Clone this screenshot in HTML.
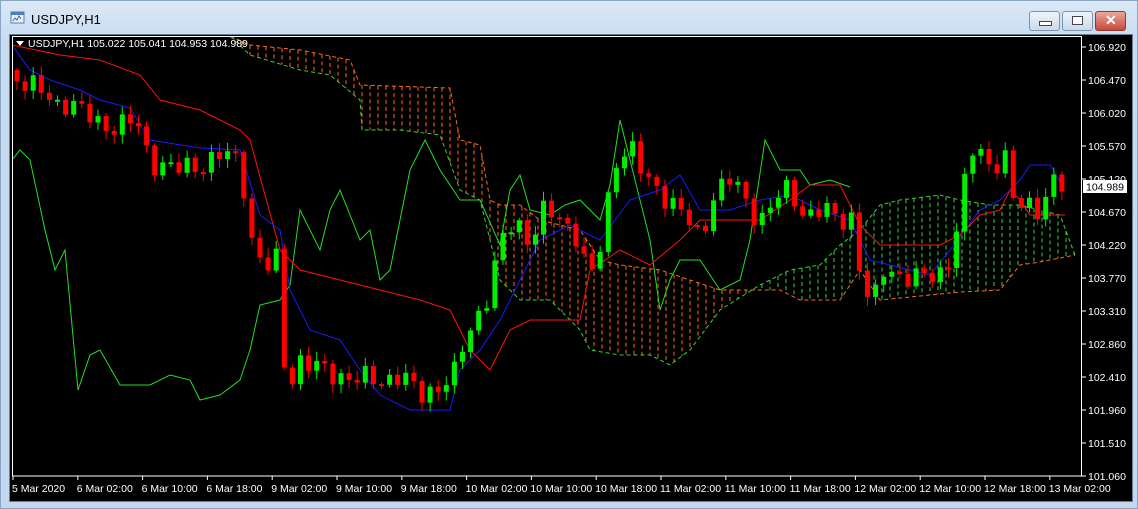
<!DOCTYPE html>
<html><head><meta charset="utf-8"><style>
html,body{margin:0;padding:0;width:1138px;height:509px;overflow:hidden;background:#cddff0;font-family:"Liberation Sans",sans-serif}
#win{position:absolute;left:0;top:0;width:1136px;height:507px;border:1px solid #8aa6c4;background:linear-gradient(#dbe8f6,#c8dcf0 40px,#c3d8ee)}
#title{position:absolute;left:30px;top:11px;font-size:13px;color:#000}
.btn{position:absolute;top:10px;width:29px;height:18px;border:1px solid #7b94b3;border-radius:3px;background:linear-gradient(#eef4fb,#cdd9e7)}
#cht{position:absolute;left:9px;top:34px;width:1122px;height:466px;background:#000;border:1px solid #6d7f93}
svg text{font-family:"Liberation Sans",sans-serif;font-size:10.5px;fill:#fff}
</style></head><body>
<div id="win">
<svg style="position:absolute;left:9px;top:9px" width="16" height="16"><rect x="1" y="2" width="13" height="11" fill="#e8f0fa" stroke="#4f7fb5"/><rect x="1" y="2" width="13" height="3" fill="#4f7fb5"/><path d="M3 11 l2-3 2 2 2-4 2 3" stroke="#3a6ea5" fill="none"/></svg>
<div id="title">USDJPY,H1</div>
<div class="btn" style="left:1028px"><div style="position:absolute;left:9px;top:9px;width:11px;height:3px;background:#fff;border:1px solid #445"></div></div>
<div class="btn" style="left:1061px"><div style="position:absolute;left:9px;top:4px;width:9px;height:7px;background:#fff;border:1px solid #445"></div></div>
<div class="btn" style="left:1094px;background:linear-gradient(#e9a89c,#c9473a);border-color:#8e3a32"><div style="position:absolute;left:9px;top:0px;color:#fff;font-weight:bold;font-size:14px">✕</div></div>
</div>
<div id="cht"></div>
<svg id="s" style="position:absolute;left:0;top:0" width="1138" height="509"></svg>
<script>
(function(){
var s=document.getElementById('s'),h='';
function L(pts,c,dash,w){h+='<polyline fill="none" stroke="'+c+'" stroke-width="'+(w||1)+'" '+(dash?'stroke-dasharray="'+dash+'" ':'')+'points="'+pts.map(function(p){return p.join(',')}).join(' ')+'"/>';}
function interp(pts,x){for(var i=1;i<pts.length;i++){if(x<=pts[i][0]){var a=pts[i-1],b=pts[i];return a[1]+(b[1]-a[1])*(x-a[0])/(b[0]-a[0]);}}return pts[pts.length-1][1];}
h+='<defs><clipPath id="c"><rect x="13" y="37" width="1069" height="439"/></clipPath></defs><g clip-path="url(#c)">';
var G=[[230,36],[250,55],[300,70],[330,75],[360,100],[362,130],[400,130],[440,135],[460,190],[480,200],[500,280],[520,300],[550,300],[580,330],[590,350],[620,355],[650,355],[670,365],[690,350],[720,310],[760,285],[790,270],[820,265],[840,245],[860,230],[880,205],[900,200],[940,195],[960,200],[990,205],[1020,205],[1040,210],[1060,215],[1075,255]];
var O=[[230,36],[250,45],[300,50],[350,60],[360,85],[450,88],[460,140],[480,145],[490,200],[500,205],[520,205],[540,220],[560,225],[580,230],[600,260],[620,265],[660,270],[690,280],[720,290],[750,290],[780,290],[800,300],[840,300],[860,270],[880,300],[960,292],[1000,290],[1020,265],[1040,262],[1075,255]];
for(var x=234;x<1075;x+=8){var a=interp(G,x),b=interp(O,x);var c=b<a?'#ff6a1a':'#3ad23a';h+='<line x1="'+x+'" x2="'+x+'" y1="'+Math.min(a,b)+'" y2="'+Math.max(a,b)+'" stroke="'+c+'" stroke-dasharray="4,3"/>';}
L(G,'#3ad23a','4,3');L(O,'#ff6a1a','4,3');
L([[12,160],[20,150],[30,160],[45,230],[55,270],[65,250],[78,390],[90,355],[100,350],[120,385],[150,385],[170,375],[190,380],[200,400],[220,395],[240,380],[250,350],[260,305],[280,300],[290,285],[300,210],[310,230],[320,250],[330,210],[340,190],[350,215],[360,240],[370,230],[380,280],[390,270],[400,220],[410,170],[425,140],[440,170],[460,200],[480,200],[500,245],[510,190],[520,175],[530,210],[550,215],[565,205],[580,200],[600,220],[610,185],[620,120],[630,160],[650,240],[660,310],[670,280],[680,260],[700,260],[720,290],[740,280],[750,240],[765,140],[780,170],[800,170],[810,185],[830,180],[850,187]],'#22e022');
L([[12,45],[60,55],[100,60],[140,75],[160,100],[200,110],[240,130],[250,140],[280,250],[300,270],[340,280],[380,290],[420,300],[450,310],[470,350],[490,370],[510,330],[530,320],[580,320],[590,270],[620,250],[650,265],[680,240],[700,220],[760,220],[790,200],[810,185],[840,185],[860,225],[880,245],[940,245],[960,235],[980,215],[1000,210],[1010,190],[1020,200],[1030,215],[1065,215]],'#ff1010');
L([[12,45],[30,70],[50,80],[80,90],[100,100],[130,108],[150,140],[200,148],[240,150],[260,215],[280,230],[290,290],[310,330],[340,340],[360,370],[380,395],[410,410],[450,410],[460,370],[480,350],[500,320],[520,280],[540,240],[570,225],[600,240],[630,200],[660,190],[680,175],[700,210],[730,210],[760,200],[790,195],[820,210],[850,220],[870,260],[890,265],[930,275],[950,250],[980,210],[1000,200],[1020,180],[1030,165],[1050,165],[1062,185]],'#1a1aff');
var K=[[15,75],[30,85],[45,95],[55,105],[70,100],[85,115],[100,125],[120,125],[135,120],[150,160],[180,170],[200,165],[220,155],[240,160],[252,240],[265,270],[278,260],[286,390],[300,360],[320,370],[340,375],[360,380],[380,380],[400,375],[420,395],[440,385],[455,375],[465,340],[480,310],[490,290],[500,245],[515,220],[530,240],[545,210],[560,220],[575,230],[590,280],[600,250],[615,160],[630,145],[645,180],[660,190],[680,210],[700,240],[715,190],[730,180],[745,200],[760,220],[775,200],[790,190],[805,215],[820,210],[840,220],[855,215],[862,295],[875,300],[885,265],[900,275],[915,280],[930,275],[945,270],[955,240],[965,185],[975,140],[990,165],[1005,160],[1015,210],[1025,200],[1040,210],[1050,185],[1060,187]];
var prev=70;
for(var cx=17,i=0;cx<1064;cx+=8.1,i++){var cl=interp(K,cx)+Math.sin(i*2.3)*9+Math.cos(i*1.1)*5;var op=prev;var up=cl<op;var bt=Math.min(op,cl),bb=Math.max(op,cl);if(bb-bt<2){bb=bt+2;}var wt=bt-2-Math.abs(Math.sin(i*3.7))*7,wb=bb+2+Math.abs(Math.cos(i*2.9))*7;var col=up?'#00ee00':'#ff0000';h+='<line x1="'+cx.toFixed(1)+'" x2="'+cx.toFixed(1)+'" y1="'+wt.toFixed(1)+'" y2="'+wb.toFixed(1)+'" stroke="'+col+'"/><rect x="'+(cx-2.5).toFixed(1)+'" y="'+bt.toFixed(1)+'" width="5" height="'+(bb-bt).toFixed(1)+'" fill="'+col+'"/>';prev=cl;}
h+='</g>';
h+='<rect x="12.5" y="36.5" width="1069" height="439.5" fill="none" stroke="#fff"/>';
var labs=['106.920','106.470','106.020','105.570','105.120','104.670','104.220','103.770','103.310','102.860','102.410','101.960','101.510','101.060'];
for(var j=0;j<14;j++){var y=47+j*33;h+='<line x1="1082" x2="1086" y1="'+y+'" y2="'+y+'" stroke="#fff"/><text x="1088" y="'+(y+4)+'">'+labs[j]+'</text>';}
h+='<rect x="1083" y="180" width="44" height="13" fill="#fff"/><text x="1086" y="190.5" style="fill:#000">104.989</text>';
var tl=['5 Mar 2020','6 Mar 02:00','6 Mar 10:00','6 Mar 18:00','9 Mar 02:00','9 Mar 10:00','9 Mar 18:00','10 Mar 02:00','10 Mar 10:00','10 Mar 18:00','11 Mar 02:00','11 Mar 10:00','11 Mar 18:00','12 Mar 02:00','12 Mar 10:00','12 Mar 18:00','13 Mar 02:00'];
for(var j=0;j<17;j++){var x2=13+j*64.8;h+='<line x1="'+x2+'" x2="'+x2+'" y1="476" y2="480" stroke="#fff"/><text x="'+(x2-1)+'" y="492">'+tl[j]+'</text>';}
h+='<path d="M16 41 h8 l-4 5z" fill="#fff"/><text x="28" y="47">USDJPY,H1  105.022 105.041 104.953 104.989</text>';
s.innerHTML=h;
})();
</script>
</body></html>
